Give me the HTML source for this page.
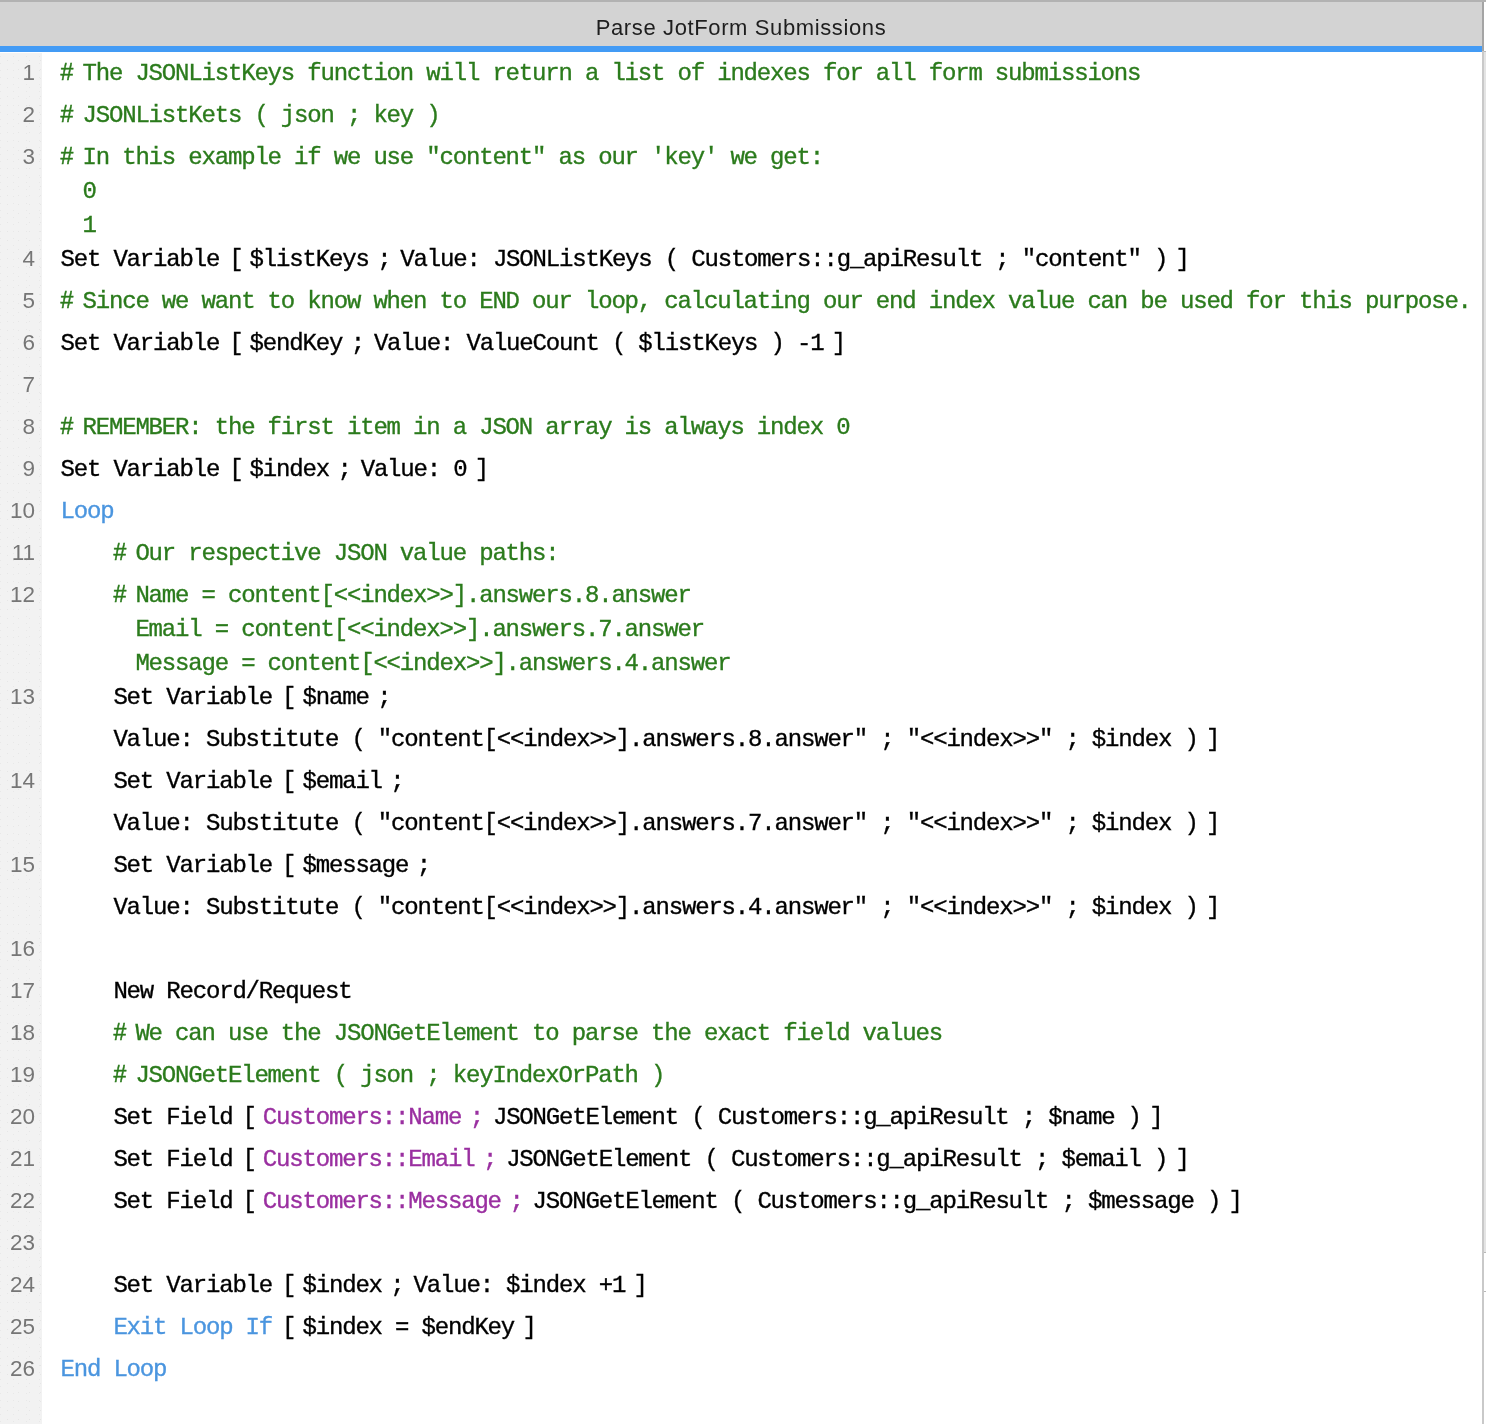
<!DOCTYPE html>
<html><head><meta charset="utf-8"><style>
html,body{margin:0;padding:0;}
body{width:1486px;height:1424px;position:relative;overflow:hidden;background:#fff;will-change:transform;}
#topb{position:absolute;left:0;top:0;width:1486px;height:2px;background:#b2b2b2;}
#title{position:absolute;left:0;top:2px;width:1482px;height:44px;background:#d3d3d3;}
#ttext{position:absolute;left:0;top:5.5px;width:1482px;text-align:center;font:22px/44px "Liberation Sans",sans-serif;letter-spacing:0.62px;color:#1e1e1e;}
#blue{position:absolute;left:0;top:46px;width:1482px;height:6px;background:#439bf5;}
#gut{position:absolute;left:0;top:53px;width:42px;height:1371px;background-color:#f2f2f2;background-image:radial-gradient(circle at 50% 50%, #e6e6e6 0.6px, rgba(242,242,242,0) 1px),radial-gradient(circle at 50% 50%, #e8e8e8 0.6px, rgba(242,242,242,0) 1px);background-size:11px 9px,13px 7px;background-position:2px 3px,7px 0px;}
#rline{position:absolute;left:1482px;top:2px;width:2px;height:1422px;background:#c9c9c9;}
#rtrack{position:absolute;left:1484px;top:52px;width:2px;height:1200px;background:#e4e4e4;}
#rtop{position:absolute;left:1482px;top:2px;width:2px;height:49px;background:#a4a4a4;}
#rtw{}
.tick{position:absolute;left:1484px;width:2px;height:1px;background:#b8b8b8;}
.ln{position:absolute;left:0;width:35px;height:0;text-align:right;font:22.5px/0px "Liberation Sans",sans-serif;color:#767676;}
.code{position:absolute;height:0;white-space:pre;font:24px/0px "Liberation Mono",monospace;letter-spacing:-1.180px;color:#000;-webkit-text-stroke:0.35px currentColor;}
.hash{position:absolute;height:0;font:23px/0px "Liberation Sans",sans-serif;-webkit-text-stroke:0.5px currentColor;}
.cm{color:#2b7b1c;}
.kw{color:#4a95df;}
.fd{color:#9a2fa0;}
</style></head><body>
<div id="topb"></div><div id="title"></div><div id="ttext">Parse JotForm Submissions</div><div id="blue"></div>
<div id="gut"></div><div id="rline"></div><div id="rtrack"></div><div class="tick" style="top:1252px"></div><div class="tick" style="top:1291px"></div><div class="tick" style="top:51px"></div><div id="rtop"></div>
<div class="ln" style="top:73px">1</div>
<div class="cm hash" style="top:71.5px;left:60.5px">#</div>
<div class="code cm" style="top:74.0px;left:82.5px">The JSONListKeys function will return a list of indexes for all form submissions</div>
<div class="ln" style="top:115px">2</div>
<div class="cm hash" style="top:113.5px;left:60.5px">#</div>
<div class="code cm" style="top:116.0px;left:82.5px">JSONListKets ( json ; key )</div>
<div class="ln" style="top:157px">3</div>
<div class="cm hash" style="top:155.5px;left:60.5px">#</div>
<div class="code cm" style="top:158.0px;left:82.5px">In this example if we use "content" as our 'key' we get:</div>
<div class="code cm" style="top:192.0px;left:82.5px">0</div>
<div class="code cm" style="top:226.0px;left:82.5px">1</div>
<div class="ln" style="top:259px">4</div>
<div class="code" style="top:260.0px;left:60.5px">Set Variable <span style="margin-left:-3.2px;letter-spacing:-7.24px">[</span> $listKeys <span style="margin-left:-4.7px;letter-spacing:-4.44px">;</span> Value: JSONListKeys ( Customers::g_apiResult ; "content" ) <span style="margin-left:-4.9px">]</span></div>
<div class="ln" style="top:301px">5</div>
<div class="cm hash" style="top:299.5px;left:60.5px">#</div>
<div class="code cm" style="top:302.0px;left:82.5px">Since we want to know when to END our loop, calculating our end index value can be used for this purpose.</div>
<div class="ln" style="top:343px">6</div>
<div class="code" style="top:344.0px;left:60.5px">Set Variable <span style="margin-left:-3.2px;letter-spacing:-7.24px">[</span> $endKey <span style="margin-left:-4.7px;letter-spacing:-4.44px">;</span> Value: ValueCount ( $listKeys ) -1 <span style="margin-left:-4.9px">]</span></div>
<div class="ln" style="top:385px">7</div>
<div class="ln" style="top:427px">8</div>
<div class="cm hash" style="top:425.5px;left:60.5px">#</div>
<div class="code cm" style="top:428.0px;left:82.5px">REMEMBER: the first item in a JSON array is always index 0</div>
<div class="ln" style="top:469px">9</div>
<div class="code" style="top:470.0px;left:60.5px">Set Variable <span style="margin-left:-3.2px;letter-spacing:-7.24px">[</span> $index <span style="margin-left:-4.7px;letter-spacing:-4.44px">;</span> Value: 0 <span style="margin-left:-4.9px">]</span></div>
<div class="ln" style="top:511px">10</div>
<div class="code" style="top:512.0px;left:60.5px"><span class="kw">Loop</span></div>
<div class="ln" style="top:553px">11</div>
<div class="cm hash" style="top:551.5px;left:113.4px">#</div>
<div class="code cm" style="top:554.0px;left:135.4px">Our respective JSON value paths:</div>
<div class="ln" style="top:595px">12</div>
<div class="cm hash" style="top:593.5px;left:113.4px">#</div>
<div class="code cm" style="top:596.0px;left:135.4px">Name = content[&lt;&lt;index&gt;&gt;].answers.8.answer</div>
<div class="code cm" style="top:630.0px;left:135.4px">Email = content[&lt;&lt;index&gt;&gt;].answers.7.answer</div>
<div class="code cm" style="top:664.0px;left:135.4px">Message = content[&lt;&lt;index&gt;&gt;].answers.4.answer</div>
<div class="ln" style="top:697px">13</div>
<div class="code" style="top:698.0px;left:113.4px">Set Variable <span style="margin-left:-3.2px;letter-spacing:-7.24px">[</span> $name <span style="margin-left:-4.7px;letter-spacing:-4.44px">;</span></div>
<div class="code" style="top:740.0px;left:113.4px">Value: Substitute ( "content[&lt;&lt;index&gt;&gt;].answers.8.answer" ; "&lt;&lt;index&gt;&gt;" ; $index ) <span style="margin-left:-4.9px">]</span></div>
<div class="ln" style="top:781px">14</div>
<div class="code" style="top:782.0px;left:113.4px">Set Variable <span style="margin-left:-3.2px;letter-spacing:-7.24px">[</span> $email <span style="margin-left:-4.7px;letter-spacing:-4.44px">;</span></div>
<div class="code" style="top:824.0px;left:113.4px">Value: Substitute ( "content[&lt;&lt;index&gt;&gt;].answers.7.answer" ; "&lt;&lt;index&gt;&gt;" ; $index ) <span style="margin-left:-4.9px">]</span></div>
<div class="ln" style="top:865px">15</div>
<div class="code" style="top:866.0px;left:113.4px">Set Variable <span style="margin-left:-3.2px;letter-spacing:-7.24px">[</span> $message <span style="margin-left:-4.7px;letter-spacing:-4.44px">;</span></div>
<div class="code" style="top:908.0px;left:113.4px">Value: Substitute ( "content[&lt;&lt;index&gt;&gt;].answers.4.answer" ; "&lt;&lt;index&gt;&gt;" ; $index ) <span style="margin-left:-4.9px">]</span></div>
<div class="ln" style="top:949px">16</div>
<div class="ln" style="top:991px">17</div>
<div class="code" style="top:992.0px;left:113.4px">New Record/Request</div>
<div class="ln" style="top:1033px">18</div>
<div class="cm hash" style="top:1031.5px;left:113.4px">#</div>
<div class="code cm" style="top:1034.0px;left:135.4px">We can use the JSONGetElement to parse the exact field values</div>
<div class="ln" style="top:1075px">19</div>
<div class="cm hash" style="top:1073.5px;left:113.4px">#</div>
<div class="code cm" style="top:1076.0px;left:135.4px">JSONGetElement ( json ; keyIndexOrPath )</div>
<div class="ln" style="top:1117px">20</div>
<div class="code" style="top:1118.0px;left:113.4px">Set Field <span style="margin-left:-3.2px;letter-spacing:-7.24px">[</span> <span class="fd">Customers::Name</span> <span class="fd" style="margin-left:-4.7px;letter-spacing:-4.44px">;</span> JSONGetElement ( Customers::g_apiResult ; $name ) <span style="margin-left:-4.9px">]</span></div>
<div class="ln" style="top:1159px">21</div>
<div class="code" style="top:1160.0px;left:113.4px">Set Field <span style="margin-left:-3.2px;letter-spacing:-7.24px">[</span> <span class="fd">Customers::Email</span> <span class="fd" style="margin-left:-4.7px;letter-spacing:-4.44px">;</span> JSONGetElement ( Customers::g_apiResult ; $email ) <span style="margin-left:-4.9px">]</span></div>
<div class="ln" style="top:1201px">22</div>
<div class="code" style="top:1202.0px;left:113.4px">Set Field <span style="margin-left:-3.2px;letter-spacing:-7.24px">[</span> <span class="fd">Customers::Message</span> <span class="fd" style="margin-left:-4.7px;letter-spacing:-4.44px">;</span> JSONGetElement ( Customers::g_apiResult ; $message ) <span style="margin-left:-4.9px">]</span></div>
<div class="ln" style="top:1243px">23</div>
<div class="ln" style="top:1285px">24</div>
<div class="code" style="top:1286.0px;left:113.4px">Set Variable <span style="margin-left:-3.2px;letter-spacing:-7.24px">[</span> $index <span style="margin-left:-4.7px;letter-spacing:-4.44px">;</span> Value: $index +1 <span style="margin-left:-4.9px">]</span></div>
<div class="ln" style="top:1327px">25</div>
<div class="code" style="top:1328.0px;left:113.4px"><span class="kw">Exit Loop If</span> <span style="margin-left:-3.2px;letter-spacing:-7.24px">[</span> $index = $endKey <span style="margin-left:-4.9px">]</span></div>
<div class="ln" style="top:1369px">26</div>
<div class="code" style="top:1370.0px;left:60.5px"><span class="kw">End Loop</span></div>
</body></html>
